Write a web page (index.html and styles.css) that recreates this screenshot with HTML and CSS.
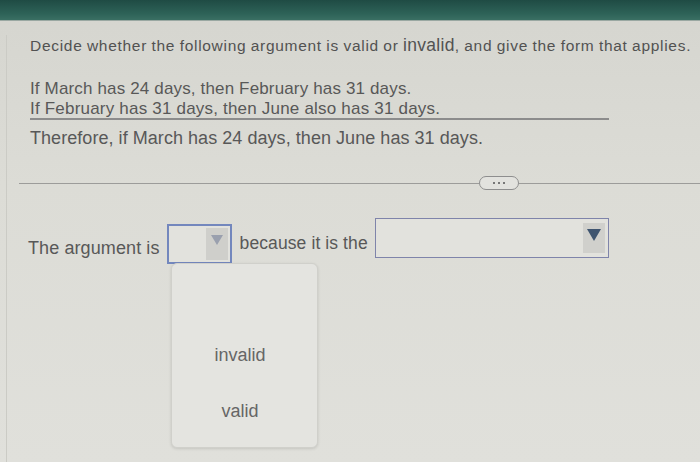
FILE: index.html
```html
<!DOCTYPE html>
<html>
<head>
<meta charset="utf-8">
<link rel="stylesheet" href="styles.css">
</head>
<body>
<div class="topbar"></div>
<main class="page">
  <p class="prompt">Decide whether the following argument is valid or <span class="big">invalid</span>, and give the form that applies.</p>
  <div class="argument">
    <div class="premise p1">If March has 24 days, then February has 31 days.</div>
    <div class="premise p2">If February has 31 days, then June also has 31 days.</div>
    <div class="conclusion">Therefore, if March has 24 days, then June has 31 days.</div>
  </div>
  <div class="divider">
    <span class="rule left"></span>
    <span class="more"><i></i><i></i><i></i></span>
    <span class="rule"></span>
  </div>
  <div class="answer">
    <span class="label">The argument is</span>
    <div class="select-wrap">
      <div class="select small"><span class="arrow"><svg width="12" height="10" viewBox="0 0 12 10"><path d="M0 0 L12 0 L6 10 Z" fill="#9aa0ae"/></svg></span></div>
      <div class="menu">
        <div class="option">invalid</div>
        <div class="option">valid</div>
      </div>
    </div>
    <span class="label because">because it is the</span>
    <div class="select large"><span class="arrow"><svg width="14" height="12" viewBox="0 0 14 12"><path d="M0 0 L14 0 L7 12 Z" fill="#3f5570"/></svg></span></div>
  </div>
</main>
</body>
</html>
```
FILE: styles.css
```css
html, body {
  margin: 0;
  padding: 0;
}
body {
  width: 700px;
  height: 462px;
  overflow: hidden;
  background: linear-gradient(180deg, #d5d5cf 0%, #dcdcd6 40%, #e0e0db 100%);
  font-family: "Liberation Sans", Arial, sans-serif;
  color: #585858;
}
.topbar {
  height: 20px;
  background: linear-gradient(180deg, #1f4b44 0%, #2e6358 70%, #3a6f63 100%);
  border-bottom: 1px solid #9aa8a2;
}
.page {
  border-left: 1px solid #cbcbc5;
  margin-left: 6px;
  padding-left: 23px;
  height: 441px;
}
.prompt {
  margin: 14px 0 0 0;
  font-size: 15.5px;
  letter-spacing: 0.7px;
  word-spacing: -0.5px;
  color: #525252;
  white-space: nowrap;
}
.prompt .big {
  font-size: 17.5px;
  letter-spacing: 0.3px;
}
.argument {
  margin-top: 22px;
  width: 579px;
}
.premise {
  font-size: 17px;
  line-height: 22px;
  letter-spacing: 0.15px;
}
.p2 {
  line-height: 18px;
  letter-spacing: 0.2px;
  border-bottom: 2px solid #8c8c8c;
}
.conclusion {
  font-size: 18px;
  line-height: 24px;
  margin-top: 6px;
  letter-spacing: 0.05px;
}
.divider {
  display: flex;
  align-items: center;
  margin: 26px 0 0 -11px;
  height: 14px;
}
.rule {
  flex: 1;
  height: 1px;
  background: #9c9c9a;
}
.rule.left {
  flex: 0 0 460px;
}
.more {
  width: 38px;
  height: 12px;
  border: 1px solid #8e8e8e;
  border-radius: 7px;
  display: flex;
  align-items: center;
  justify-content: center;
  gap: 3px;
  background: #e2e2de;
}
.more i {
  width: 2px;
  height: 2px;
  background: #777;
  display: block;
}
.answer {
  display: flex;
  align-items: flex-start;
  margin: 22px 0 0 -2px;
}
.label {
  font-size: 18px;
  margin-top: 26px;
  margin-right: 7px;
  letter-spacing: 0.1px;
}
.because {
  margin-top: 21px;
  margin-left: 8px;
  font-size: 17.5px;
}
.select-wrap {
  position: relative;
  width: 65px;
  margin-top: 12px;
}
.select {
  box-sizing: border-box;
  display: flex;
  justify-content: flex-end;
  align-items: center;
  background: #e2e2dd;
}
.select.small {
  width: 65px;
  height: 40px;
  border: 2.5px solid #7387bd;
  padding-right: 2px;
}
.select.small .arrow {
  width: 22px;
  height: 32px;
  background: #cfcfcb;
  display: flex;
  align-items: flex-start;
  justify-content: center;
  padding-top: 7px;
  box-sizing: border-box;
}
.select.large {
  width: 234px;
  height: 40px;
  border: 1.5px solid #7f84aa;
  padding-right: 3px;
  margin-top: 6px;
}
.select.large .arrow {
  width: 22px;
  height: 30px;
  background: #d0d0cc;
  display: flex;
  align-items: flex-start;
  justify-content: center;
  padding-top: 6px;
  box-sizing: border-box;
}
.menu {
  position: absolute;
  left: 4px;
  top: 39px;
  width: 147px;
  height: 185px;
  box-sizing: border-box;
  background: #e4e4e0;
  border: 1px solid #d0d0cb;
  border-radius: 6px;
  box-shadow: 0 1px 3px rgba(0,0,0,0.12);
  display: flex;
  flex-direction: column;
  align-items: center;
  padding-top: 81px;
  padding-right: 8px;
}
.option {
  font-size: 18px;
  color: #666;
  height: 56px;
  flex-shrink: 0;
}
```
